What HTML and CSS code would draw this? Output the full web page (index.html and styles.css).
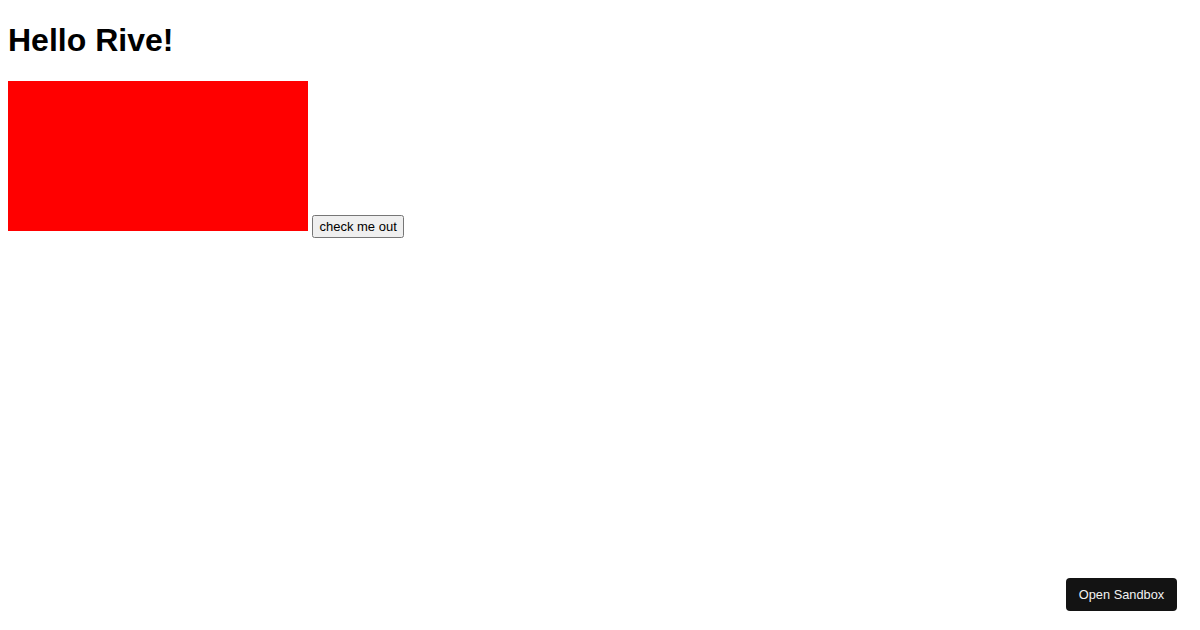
FILE: index.html
```html
<!DOCTYPE html>
<html>
<head>
<meta charset="utf-8">
<link rel="stylesheet" href="styles.css">
</head>
<body>
<h1 class="title">Hello Rive!</h1>
<div class="stage"><span class="canvas"></span> <button class="check">check me out</button></div>
<a class="sandbox">Open Sandbox</a>
</body>
</html>
```
FILE: styles.css
```css
body {
  margin: 8px;
  font-family: "Liberation Sans", Arial, sans-serif;
  background: #fff;
}
.title {
  font-size: 32px;
  font-weight: bold;
  margin: 14.44px 0 21.44px;
}
.canvas {
  display: inline-block;
  width: 300px;
  height: 150px;
  background: #ff0000;
}
.check {
  font-family: "Liberation Sans", Arial, sans-serif;
  font-size: 13px;
  padding: 2px 5px 2px;
}
.sandbox {
  position: fixed;
  right: 23px;
  bottom: 19px;
  width: 111px;
  height: 33px;
  box-sizing: border-box;
  background: #131313;
  color: #f2f2f2;
  border-radius: 4px;
  font-family: "Liberation Sans", Arial, sans-serif;
  font-size: 12.8px;
  display: flex;
  align-items: center;
  justify-content: center;
}
```
